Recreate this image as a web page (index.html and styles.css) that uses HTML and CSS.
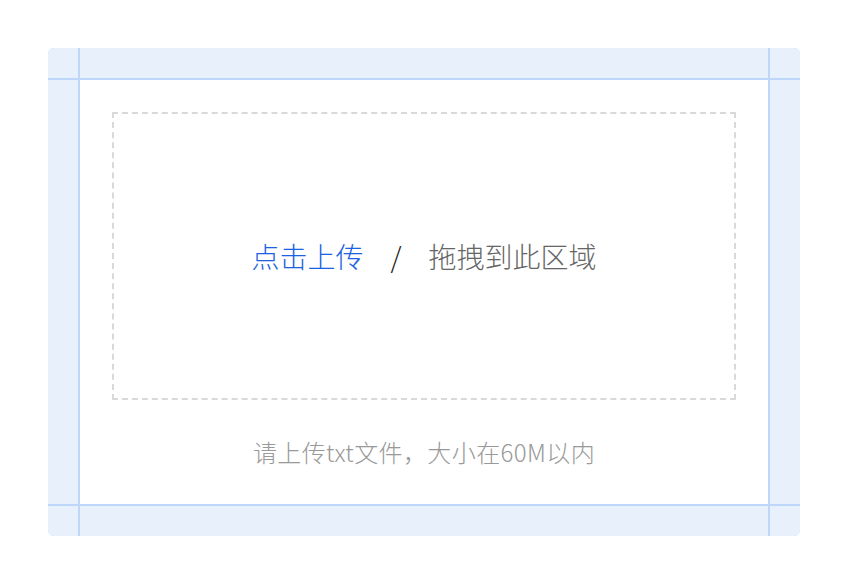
FILE: index.html
```html
<!DOCTYPE html>
<html lang="zh-CN">
<head>
    <meta charset="UTF-8">
    <meta name="viewport" content="width=device-width, initial-scale=1.0">
    <title>上传</title>
    <link rel="stylesheet" href="styles.css">
</head>
<body>
    <div class="box-model">
        <div class="pad"></div>
        <div class="pad"></div>
        <div class="pad"></div>

        <div class="pad"></div>
        <!-- Upload Area -->
        <div class="content">
            <div class="drop-zone">
                <span class="link">点击上传</span>
                <span class="slash">/</span>
                <span class="hint">拖拽到此区域</span>
            </div>
            <p class="note">请上传txt文件，大小在60M以内</p>
        </div>
        <div class="pad"></div>

        <div class="pad"></div>
        <div class="pad"></div>
        <div class="pad"></div>
    </div>
</body>
</html>
```

FILE: styles.css
```css
/* Global Styles */
* {
    margin: 0;
    padding: 0;
    box-sizing: border-box;
}

body {
    font-family: "Noto Sans CJK SC", "Noto Sans", sans-serif;
    background-color: #ffffff;
    padding: 48px;
}

/* Box model guide */
.box-model {
    width: 752px;
    display: grid;
    grid-template-columns: 30px 688px 30px;
    grid-template-rows: 30px 424px 30px;
    gap: 2px;
    background-color: #bed6fa;
    border-radius: 6px;
    overflow: hidden;
}

.pad {
    background-color: #e8f0fc;
}

.content {
    background-color: #ffffff;
    padding: 32px;
}

/* Drop zone */
.drop-zone {
    height: 288px;
    border: 2px dashed #d9d9d9;
    display: flex;
    align-items: center;
    justify-content: center;
    font-size: 28px;
    font-weight: 300;
    line-height: 40px;
}

.drop-zone .link {
    color: #1a62e0;
}

.drop-zone .slash {
    color: #1a1a1a;
    margin: 0 27px;
}

.drop-zone .hint {
    color: #666;
}

.note {
    margin-top: 32px;
    text-align: center;
    font-size: 24px;
    font-weight: 300;
    letter-spacing: 0.4px;
    line-height: 40px;
    color: #999;
}
```
